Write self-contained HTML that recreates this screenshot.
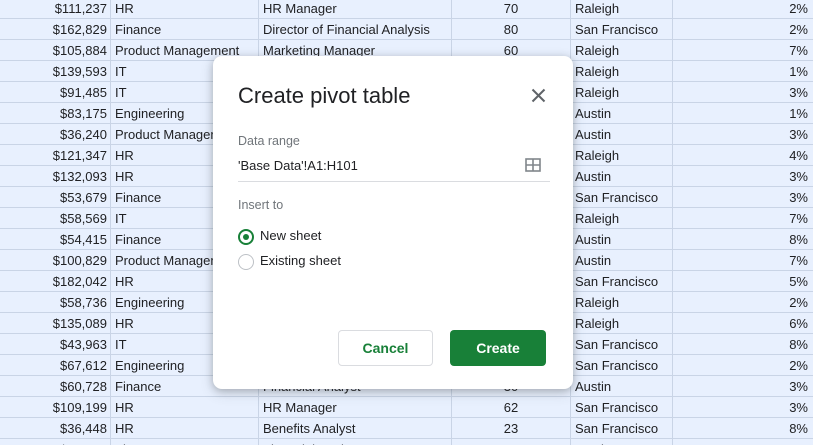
<!DOCTYPE html>
<html style="margin:0;width:813px;height:445px;overflow:hidden"><head><meta charset="utf-8"><style>
body{margin:0;width:813px;height:445px;overflow:hidden;background:#e8f0fe;font-family:"Liberation Sans",Arial,sans-serif;position:relative}
.r{position:absolute;left:0;width:813px;height:21px;border-bottom:1px solid #c9d4e6;box-sizing:border-box;font-size:13px;color:#202124}
.r span{position:absolute;top:3px;white-space:nowrap}
.vl{position:absolute;top:0;height:445px;width:1px;background:#c9d4e6}
.a{right:706px}.b{left:115px}.c{left:263px}.d{left:452px;width:118px;text-align:center}.e{left:575px}.f{right:5px}
.dlg{position:absolute;left:213px;top:56px;width:360px;height:333px;background:#fff;border-radius:9px;box-shadow:0 2px 8px rgba(60,64,67,.3),0 4px 14px rgba(60,64,67,.15)}
.dlg div{position:absolute}
</style></head><body>
<div class="vl" style="left:110px"></div><div class="vl" style="left:258px"></div><div class="vl" style="left:451px"></div><div class="vl" style="left:570px"></div><div class="vl" style="left:672px"></div>
<div id="rows"></div>
<script>
var d=[["$111,237","HR","HR Manager","70","Raleigh","2%"],["$162,829","Finance","Director of Financial Analysis","80","San Francisco","2%"],["$105,884","Product Management","Marketing Manager","60","Raleigh","7%"],["$139,593","IT","IT Manager","55","Raleigh","1%"],["$91,485","IT","IT Analyst","40","Raleigh","3%"],["$83,175","Engineering","Engineer","35","Austin","1%"],["$36,240","Product Management","Product Analyst","22","Austin","3%"],["$121,347","HR","HR Manager","65","Raleigh","4%"],["$132,093","HR","HR Director","70","Austin","3%"],["$53,679","Finance","Financial Analyst","30","San Francisco","3%"],["$58,569","IT","IT Analyst","28","Raleigh","7%"],["$54,415","Finance","Financial Analyst","31","Austin","8%"],["$100,829","Product Management","Product Manager","50","Austin","7%"],["$182,042","HR","HR Director","75","San Francisco","5%"],["$58,736","Engineering","Engineer","29","Raleigh","2%"],["$135,089","HR","HR Manager","66","Raleigh","6%"],["$43,963","IT","IT Analyst","25","San Francisco","8%"],["$67,612","Engineering","Engineer","33","San Francisco","2%"],["$60,728","Finance","Financial Analyst","30","Austin","3%"],["$109,199","HR","HR Manager","62","San Francisco","3%"],["$36,448","HR","Benefits Analyst","23","San Francisco","8%"],["$76,588","Finance","Financial Analyst","34","Austin","4%"]];
var h="";d.forEach(function(r,i){h+='<div class="r" style="top:'+(-2+21*i)+'px"><span class="a">'+r[0]+'</span><span class="b">'+r[1]+'</span><span class="c">'+r[2]+'</span><span class="d">'+r[3]+'</span><span class="e">'+r[4]+'</span><span class="f">'+r[5]+'</span></div>'});
document.getElementById("rows").innerHTML=h;
</script>
<div class="dlg">
<div style="left:25px;top:27px;font-size:22px;color:#202124">Create pivot table</div>
<svg style="position:absolute;left:318px;top:32px" width="15" height="15" viewBox="0 0 15 15"><path d="M1.5 1.5L13.5 13.5M13.5 1.5L1.5 13.5" stroke="#5f6368" stroke-width="2"/></svg>
<div style="left:25px;top:78px;font-size:12.5px;color:#70757a">Data range</div>
<div style="left:25px;top:102px;font-size:13px;color:#202124">'Base Data'!A1:H101</div>
<svg style="position:absolute;left:312px;top:102px" width="16" height="14" viewBox="0 0 16 14"><rect x="1" y="1" width="14" height="12" fill="none" stroke="#80868b" stroke-width="1.6"/><path d="M8 1V13M1 7H15" stroke="#80868b" stroke-width="1.6"/></svg>
<div style="left:25px;top:125px;width:312px;height:1px;background:#dadce0"></div>
<div style="left:25px;top:142px;font-size:12.5px;color:#70757a">Insert to</div>
<div style="left:25px;top:173px;width:12px;height:12px;border:2px solid #188038;border-radius:50%"></div>
<div style="left:30px;top:178px;width:6px;height:6px;background:#188038;border-radius:50%"></div>
<div style="left:47px;top:172px;font-size:13px;color:#202124">New sheet</div>
<div style="left:25px;top:198px;width:14px;height:14px;border:1px solid #bdc1c6;border-radius:50%"></div>
<div style="left:47px;top:197px;font-size:13px;color:#202124">Existing sheet</div>
<div style="left:125px;top:274px;width:93px;height:34px;border:1px solid #dadce0;border-radius:4px;text-align:center;line-height:34px;font-size:14px;font-weight:bold;color:#188038">Cancel</div>
<div style="left:237px;top:274px;width:96px;height:36px;background:#188038;border-radius:4px;text-align:center;line-height:36px;font-size:14px;font-weight:bold;color:#fff">Create</div>
</div>
</body></html>
